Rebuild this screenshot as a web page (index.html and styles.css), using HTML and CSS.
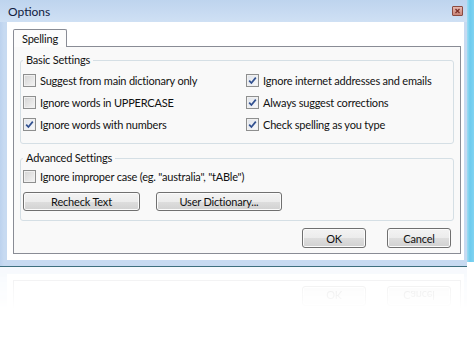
FILE: index.html
```html
<!DOCTYPE html>
<html lang="en">
<head>
  <meta charset="UTF-8">
  <title>Options</title>
  <link rel="stylesheet" href="styles.css">
</head>
<body>

  <div class="screen">
    <div class="window-row">
      <div class="window">
        <div class="titlebar">
          <span class="title">Options</span>
          <span class="close">
            <svg width="9" height="8" viewBox="0 0 9 8"><path d="M2.5 2 L6.5 6 M6.5 2 L2.5 6" stroke="#7a2d24" stroke-width="1.2"/></svg>
          </span>
        </div>
        <div class="frame">
          <div class="client">
            <div class="tabstrip">
              <div class="tab">Spelling</div>
              <div class="tabfill"></div>
            </div>
            <div class="panel">
              <fieldset class="group">
                <legend>Basic Settings</legend>
                <div class="options">
                  <label class="opt"><span class="cb"></span>Suggest from main dictionary only</label>
                  <label class="opt"><span class="cb on"><svg width="11" height="11" viewBox="0 0 11 11"><path d="M2.2 5.6 L4.4 8 L8.8 2.6" fill="none" stroke="#304f8f" stroke-width="1.7"/></svg></span>Ignore internet addresses and emails</label>
                  <label class="opt"><span class="cb"></span>Ignore words in UPPERCASE</label>
                  <label class="opt"><span class="cb on"><svg width="11" height="11" viewBox="0 0 11 11"><path d="M2.2 5.6 L4.4 8 L8.8 2.6" fill="none" stroke="#304f8f" stroke-width="1.7"/></svg></span>Always suggest corrections</label>
                  <label class="opt"><span class="cb on"><svg width="11" height="11" viewBox="0 0 11 11"><path d="M2.2 5.6 L4.4 8 L8.8 2.6" fill="none" stroke="#304f8f" stroke-width="1.7"/></svg></span>Ignore words with numbers</label>
                  <label class="opt"><span class="cb on"><svg width="11" height="11" viewBox="0 0 11 11"><path d="M2.2 5.6 L4.4 8 L8.8 2.6" fill="none" stroke="#304f8f" stroke-width="1.7"/></svg></span>Check spelling as you type</label>
                </div>
              </fieldset>

              <fieldset class="group advanced">
                <legend>Advanced Settings</legend>
                <label class="opt single"><span class="cb"></span>Ignore improper case (eg. "australia", "tABle")</label>
                <div class="tools">
                  <button class="btn recheck">Recheck Text</button>
                  <button class="btn userdict">User Dictionary...</button>
                </div>
              </fieldset>

              <div class="actions">
                <button class="btn small">OK</button>
                <button class="btn small">Cancel</button>
              </div>
            </div>
          </div>
        </div>
      </div>
      <div class="glow"></div>
    </div>

    <div class="reflection">
      <div class="reflect-client">
        <div class="reflect-panel">
          <div class="actions mirror">
            <button class="btn small">OK</button>
            <button class="btn small">Cancel</button>
          </div>
        </div>
      </div>
    </div>
  </div>

</body>
</html>
```

FILE: styles.css
```css
body {
  margin: 0;
  background: #fff;
  font-family: Lato, "Open Sans", sans-serif;
  font-size: 11px;
  letter-spacing: -0.2px;
  color: #111;
}

.screen {
  width: 474px;
  height: 340px;
  overflow: hidden;
}

.window-row {
  display: flex;
}

.window {
  width: 467px;
}

.titlebar {
  height: 22px;
  display: flex;
  align-items: center;
  justify-content: space-between;
  padding: 0 4px 0 8px;
  background: linear-gradient(#bed4ee, #cfe0f4);
  font-size: 12px;
  letter-spacing: 0;
  color: #102040;
}

.close {
  width: 9px;
  height: 8px;
  border: 1px solid #8b4a40;
  border-radius: 1px;
  background: linear-gradient(#e6b9b1, #c98477);
  display: flex;
}

.frame {
  padding: 0 3px 6px 7px;
  background: linear-gradient(90deg, #bcd2ee, #c7daf1 4px, #c7daf1);
  border-bottom: 1px solid #3e6f7f;
}

.client {
  background: #fff;
  padding: 7px 3px 6px 6px;
}

.tabstrip {
  display: flex;
}

.tab {
  height: 17px;
  line-height: 17px;
  padding: 0 8px;
  border: 1px solid #898c95;
  border-bottom: none;
  border-radius: 2px 2px 0 0;
  background: #fcfcfc;
}

.tabfill {
  flex: 1;
  border-bottom: 1px solid #898c95;
}

.panel {
  background: #f9f9f9;
  border: 1px solid #898c95;
  border-top: none;
  padding: 6px 0 5px;
}

.group {
  margin: 0 6px;
  padding: 0 0 8px 2px;
  border: 1px solid #d5dfe5;
  border-radius: 3px;
  min-width: 0;
}

.group legend {
  padding: 0 3px;
  line-height: 14px;
}

.options {
  display: grid;
  grid-template-columns: 223px 1fr;
  grid-auto-rows: 22px;
  padding-top: 2px;
}

.opt {
  display: flex;
  align-items: center;
  gap: 4px;
  white-space: nowrap;
}

.opt.single {
  height: 22px;
}

.cb {
  width: 11px;
  height: 11px;
  border: 1px solid #8e8f8f;
  background: linear-gradient(135deg, #d4d4d4, #f4f4f4);
  box-shadow: inset 0 0 0 1px #f0f0f0;
  display: flex;
  align-items: center;
  justify-content: center;
}

.cb.on {
  background: linear-gradient(135deg, #dfe3ea, #f8f9fb);
}

.advanced {
  margin-top: 7px;
  padding-bottom: 9px;
}

.tools {
  display: flex;
  gap: 16px;
  margin-top: 5px;
}

.btn {
  height: 19px;
  padding: 0;
  font-family: Lato, "Open Sans", sans-serif;
  font-size: 11px;
  letter-spacing: -0.2px;
  color: #111;
  border: 1px solid #707070;
  border-radius: 3px;
  background: linear-gradient(#f3f3f3 0%, #ececec 50%, #dedede 50%, #d1d1d1 100%);
  box-shadow: inset 0 0 0 1px #fbfbfb;
}

.recheck { width: 117px; }
.userdict { width: 126px; }

.actions {
  display: flex;
  justify-content: flex-end;
  gap: 21px;
  margin-top: 7px;
  padding-right: 9px;
}

.btn.small {
  width: 64px;
  height: 20px;
}

.glow {
  width: 7px;
  height: 262px;
  background: linear-gradient(90deg, #9fdcf2, #6ccbee 3px, #7fd3f1);
}

.reflection {
  height: 73px;
  width: 467px;
  padding: 7px 3px 0 7px;
  box-sizing: border-box;
  background: #c7daf1;
  opacity: 0.16;
  -webkit-mask-image: linear-gradient(#000, rgba(0, 0, 0, 0.5) 20px, transparent 42px);
}

.reflect-client {
  background: #fff;
  padding: 6px 3px 0 6px;
  height: 60px;
}

.reflect-panel {
  border: 1px solid #898c95;
  border-bottom: none;
  height: 60px;
}

.mirror {
  margin-top: 5px;
}

.mirror .btn {
  transform: scaleY(-1);
}
```
